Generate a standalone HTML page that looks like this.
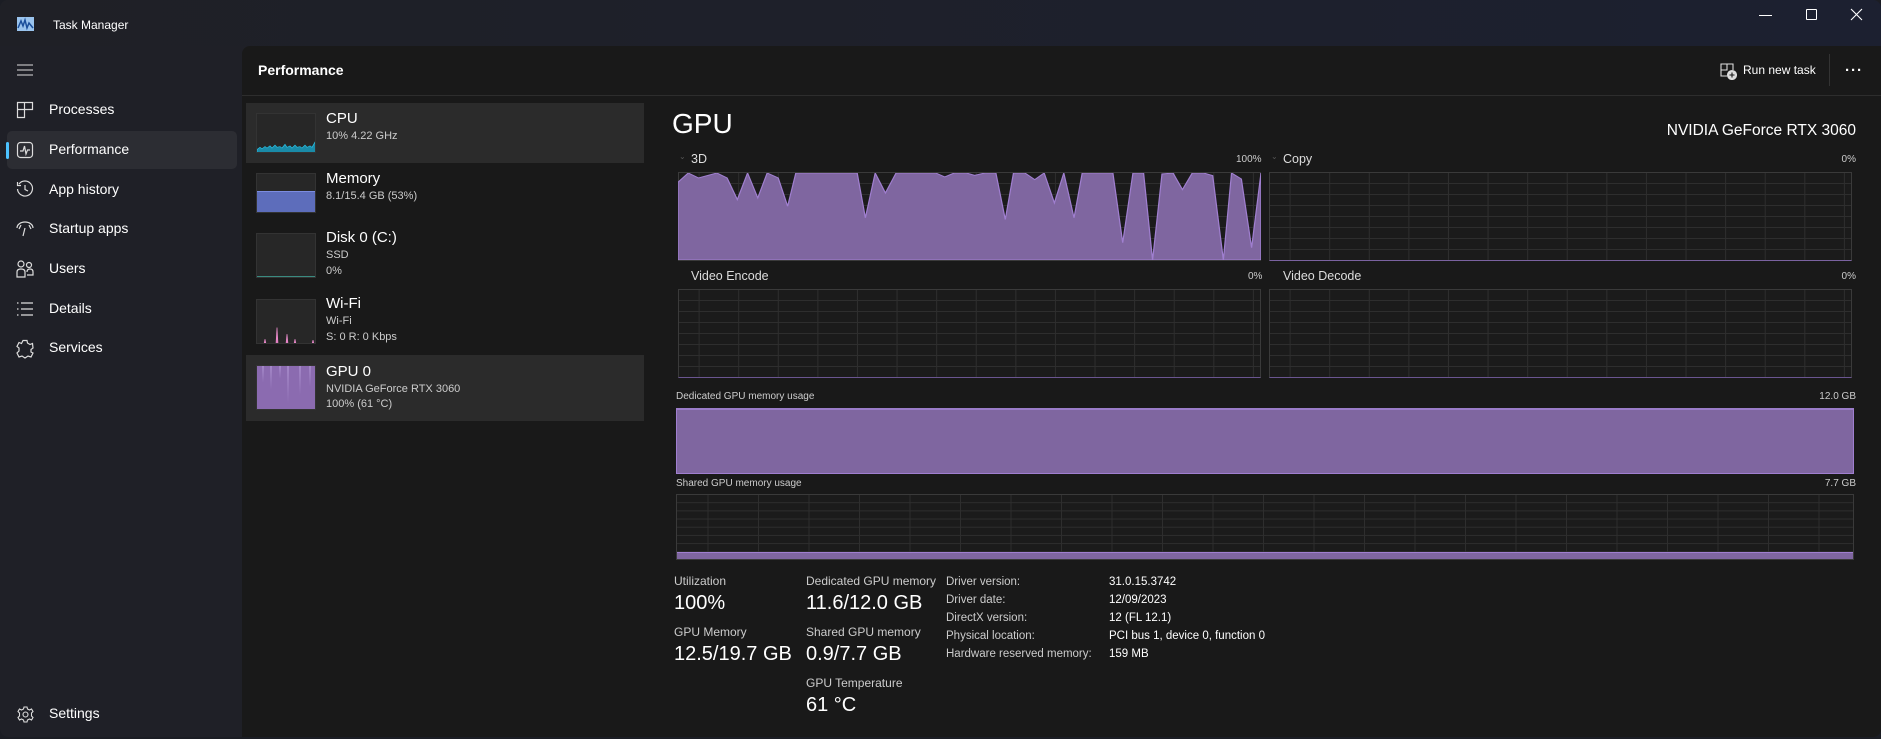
<!DOCTYPE html>
<html><head><meta charset="utf-8"><style>
*{margin:0;padding:0;box-sizing:border-box}
body{width:1881px;height:739px;background:#1b1d24;font-family:"Segoe UI","Liberation Sans",sans-serif;color:#fff;overflow:hidden;position:relative}
.win{position:absolute;left:0;top:0;width:1881px;height:737px;background:#1f2027;border-radius:8px;overflow:hidden}
.tb{position:absolute;left:0;top:0;width:1881px;height:46px;background:linear-gradient(90deg,#1f2026,#1c2030)}
.a{position:absolute;white-space:nowrap}
.content{position:absolute;left:242px;top:46px;width:1639px;height:691px;background:#191919;border-top-left-radius:8px}
.nav{position:absolute;left:49px;font-size:14px;color:#fff}
.grid{position:absolute;border:1px solid #3a3a3a;background-color:#1b1b1b;
background-image:linear-gradient(90deg,#2e2e2e 1px,transparent 1px),linear-gradient(#2e2e2e 1px,transparent 1px);
background-size:39.6px 100%,100% 11px;background-position:-20px 0,0 -1px}
.lbl{font-size:12.5px;color:#ddd}
.sm{font-size:11px;color:#ccc}
.st{font-size:12px;color:#ccc}
.big{font-size:20px;color:#fff}
.thumb{position:absolute;left:256px;width:60px;height:40px;background:#272727;border:1px solid #333;overflow:hidden}
</style></head><body>
<div class="win">
<div class="tb"></div>
<svg class="a" style="left:17px;top:17px" width="17" height="14" viewBox="0 0 17 14"><rect width="17" height="14" fill="#9ac4ee"/><polyline points="1,11 4,4 6,9 8,3 10,11 12,6 16,11" fill="none" stroke="#1a4e9a" stroke-width="1.5"/></svg>
<div class="a" style="left:53px;top:18px;font-size:12px">Task Manager</div>
<div class="a" style="left:1759px;top:15px;width:13px;height:1px;background:#fff"></div>
<div class="a" style="left:1806px;top:9px;width:11px;height:11px;border:1px solid #fff;border-radius:1px"></div>
<svg class="a" style="left:1850px;top:8px" width="13" height="13"><path d="M1 1L12 12M12 1L1 12" stroke="#fff" stroke-width="1.1"/></svg>

<svg class="a" style="left:17px;top:64px" width="16" height="12"><path d="M0 1H16M0 6H16M0 11H16" stroke="#ddd" stroke-width="1.1"/></svg>
<div class="a" style="left:7px;top:131px;width:230px;height:38px;background:#2c2d33;border-radius:5px"></div>
<div class="a" style="left:6px;top:142px;width:3px;height:17px;background:#4cc2ff;border-radius:2px"></div>

<svg class="a" style="left:16px;top:101px" width="18" height="18" fill="none" stroke="#ddd" stroke-width="1.2"><path d="M1.5 1.5H16.5V8.5H8.5V16.5H1.5ZM8.5 1.5V8.5M1.5 8.5H8.5"/></svg>
<div class="nav" style="top:101px">Processes</div>
<svg class="a" style="left:16px;top:141px" width="18" height="18" fill="none" stroke="#ddd" stroke-width="1.2"><rect x="1.5" y="1.5" width="15" height="15" rx="3"/><path d="M4 10H7L8.5 5L10 13L11.5 9H14"/></svg>
<div class="nav" style="top:141px">Performance</div>
<svg class="a" style="left:16px;top:180px" width="18" height="18" fill="none" stroke="#ddd" stroke-width="1.2"><path d="M3 4A7.5 7.5 0 1 1 1.5 9M1.5 2V5.5H5M9 5V9.5L12 11"/></svg>
<div class="nav" style="top:181px">App history</div>
<svg class="a" style="left:15px;top:220px" width="20" height="18" fill="none" stroke="#ddd" stroke-width="1.2"><path d="M2 8A8 6 0 0 1 18 8M10 8L8 16M6 5L4 9M14 5L16 9"/></svg>
<div class="nav" style="top:220px">Startup apps</div>
<svg class="a" style="left:16px;top:260px" width="18" height="19" fill="none" stroke="#ddd" stroke-width="1.2"><circle cx="5" cy="4" r="3"/><circle cx="13" cy="5" r="2.5"/><path d="M1 17V12Q1 9 5 9Q9 9 9 12V17H1ZM11 12Q11 9 14 9Q17 9 17 12V15H11"/></svg>
<div class="nav" style="top:260px">Users</div>
<svg class="a" style="left:16px;top:301px" width="18" height="16" fill="none" stroke="#ddd" stroke-width="1.2"><path d="M1 2H2.5M1 8H2.5M1 14H2.5M5 2H17M5 8H17M5 14H17"/></svg>
<div class="nav" style="top:300px">Details</div>
<svg class="a" style="left:16px;top:339px" width="18" height="20" fill="none" stroke="#ddd" stroke-width="1.2"><path d="M7 1.5H11L11.5 4L14 5.5L16.5 4.5L17 9L15 10.5V13L17 14L15 18L12 17L9 19L6 17L3 18L1 14L3 12V9L1 7.5L3 3.5L5.5 4.5Z"/></svg>
<div class="nav" style="top:339px">Services</div>
<svg class="a" style="left:17px;top:706px" width="17" height="17" fill="none" stroke="#ddd" stroke-width="1.1"><circle cx="8.5" cy="8.5" r="2.5"/><path d="M7 1H10L10.5 3L12.5 4L14.5 3L16 5.5L14.5 7V10L16 11.5L14.5 14L12.5 13L10.5 14L10 16H7L6.5 14L4.5 13L2.5 14L1 11.5L2.5 10V7L1 5.5L2.5 3L4.5 4L6.5 3Z"/></svg>
<div class="nav" style="top:705px">Settings</div>

<div class="content"></div>
<div class="a" style="left:258px;top:62px;font-size:14px;font-weight:bold">Performance</div>
<div class="a" style="left:242px;top:95px;width:1639px;height:1px;background:#2d2d2d"></div>
<svg class="a" style="left:1720px;top:63px" width="17" height="17" fill="none" stroke="#ddd" stroke-width="1.1"><path d="M1 1H7V7H1ZM7 1H13V7M1 7V13H7"/><circle cx="12" cy="12" r="4.5" fill="#ddd"/><path d="M12 9.5V14.5M9.5 12H14.5" stroke="#191919"/></svg>
<div class="a" style="left:1743px;top:63px;font-size:12px">Run new task</div>
<div class="a" style="left:1829px;top:54px;width:1px;height:32px;background:#333"></div>
<div class="a" style="left:1845px;top:62px;font-size:15px;font-weight:bold;letter-spacing:1px">···</div>

<div class="a" style="left:246px;top:103px;width:398px;height:60px;background:#2b2b2b"></div>
<div class="a" style="left:246px;top:355px;width:398px;height:66px;background:#2b2b2b"></div>

<div class="thumb" style="top:113px"><svg width="60" height="40" viewBox="0 0 60 54" preserveAspectRatio="none"><path d="M0 48L3 45L5 47L8 44L10 46L13 43L15 46L18 42L20 45L23 44L25 46L28 41L30 45L33 43L35 46L38 42L40 45L43 44L45 46L48 42L50 45L53 43L55 45L58 38L60 44V54H0Z" fill="#1a8ba8" stroke="#2bc0e4" stroke-width="0.8"/></svg></div>
<div class="a" style="left:326px;top:110px;font-size:15px">CPU</div>
<div class="a sm" style="left:326px;top:130px">10% 4.22 GHz</div>

<div class="thumb" style="top:173px"><div style="position:absolute;left:0;bottom:0;width:60px;height:21px;background:#5d6dbb;border-top:1px solid #7c8ce0"></div></div>
<div class="a" style="left:326px;top:170px;font-size:15px">Memory</div>
<div class="a sm" style="left:326px;top:190px">8.1/15.4 GB (53%)</div>

<div class="thumb" style="top:233px;height:45px"><div style="position:absolute;left:0;bottom:0;width:60px;height:1px;background:#3a8a80"></div></div>
<div class="a" style="left:326px;top:229px;font-size:15px">Disk 0 (C:)</div>
<div class="a sm" style="left:326px;top:249px">SSD</div>
<div class="a sm" style="left:326px;top:265px">0%</div>

<div class="thumb" style="top:299px;height:45px"><svg width="60" height="45" viewBox="0 0 60 54" preserveAspectRatio="none"><path d="M0 53L7 53L8 47L9 53L19 53L20 33L21 53L29 53L30 41L31 53L37 53L38 47L39 53L55 53L56 48L57 53L60 53V54H0Z" fill="#d870b8" stroke="#f090d0" stroke-width="0.7"/></svg></div>
<div class="a" style="left:326px;top:295px;font-size:15px">Wi-Fi</div>
<div class="a sm" style="left:326px;top:315px">Wi-Fi</div>
<div class="a sm" style="left:326px;top:331px">S: 0 R: 0 Kbps</div>

<div class="thumb" style="top:365px;height:45px;background:#8b6bb0"><svg width="60" height="45" viewBox="0 0 60 54" preserveAspectRatio="none"><path d="M0 0H60V54H0Z" fill="#8b6bb0"/><path d="M5 0L6 20L7 0M13 0L14 28L15 0M22 0L23 15L24 0M30 0L31 45L32 0M42 0L43 35L44 0M52 0L53 25L54 0" fill="#a488c8"/></svg></div>
<div class="a" style="left:326px;top:363px;font-size:15px">GPU 0</div>
<div class="a sm" style="left:326px;top:383px">NVIDIA GeForce RTX 3060</div>
<div class="a sm" style="left:326px;top:398px">100% (61 °C)</div>

<div class="a" style="left:672px;top:108px;font-size:28px">GPU</div>
<div class="a" style="right:25px;top:122px;font-size:15.5px">NVIDIA GeForce RTX 3060</div>

<div class="a" style="left:679px;top:152px;font-size:8px;color:#555">⌄</div>
<div class="a lbl" style="left:691px;top:152px">3D</div>
<div class="a sm" style="left:1236px;top:154px;font-size:10px">100%</div>
<div class="grid" style="left:678px;top:172px;width:583px;height:89px"></div>
<svg class="a" style="left:678px;top:173px" width="583" height="87" viewBox="45 250 1425 262" preserveAspectRatio="none"><path d="M45 512L45 278L70 250L95 265L140 250L165 265L190 330L215 250L240 325L263 250L290 265L313 350L333 250L483 250L503 385L527 250L552 310L578 250L675 250L697 262L720 250L750 250L770 257L795 250L822 250L845 390L865 250L893 250L917 270L940 250L965 340L988 250L1013 385L1033 250L1108 250L1132 460L1157 250L1183 250L1205 512L1228 253L1255 250L1278 300L1302 250L1330 250L1352 258L1378 512L1398 250L1422 268L1447 475L1470 250L1470 512Z" fill="#7f66a0" stroke="#a07fd0" stroke-width="3"/></svg>

<div class="a" style="left:1271px;top:152px;font-size:8px;color:#555">⌄</div>
<div class="a lbl" style="left:1283px;top:152px">Copy</div>
<div class="a sm" style="right:25px;top:154px;font-size:10px">0%</div>
<div class="grid" style="left:1269px;top:172px;width:583px;height:89px;border-bottom:1px solid #7a62a0"></div>

<div class="a lbl" style="left:691px;top:269px">Video Encode</div>
<div class="a sm" style="left:1248px;top:271px;font-size:10px">0%</div>
<div class="grid" style="left:678px;top:289px;width:583px;height:89px;border-bottom:1px solid #6a5590"></div>

<div class="a lbl" style="left:1283px;top:269px">Video Decode</div>
<div class="a sm" style="right:25px;top:271px;font-size:10px">0%</div>
<div class="grid" style="left:1269px;top:289px;width:583px;height:89px;border-bottom:1px solid #6a5590"></div>

<div class="a sm" style="left:676px;top:391px;font-size:10px">Dedicated GPU memory usage</div>
<div class="a sm" style="right:25px;top:391px;font-size:10px">12.0 GB</div>
<div class="a" style="left:676px;top:408px;width:1178px;height:66px;background:#7f66a0;border:1px solid #a07fd0;border-top:2px solid #9a7cc8"></div>

<div class="a sm" style="left:676px;top:478px;font-size:10px">Shared GPU memory usage</div>
<div class="a sm" style="right:25px;top:478px;font-size:10px">7.7 GB</div>
<div class="grid" style="left:676px;top:494px;width:1178px;height:66px;background-size:50.5px 100%,100% 8.2px"></div>
<div class="a" style="left:677px;top:552px;width:1176px;height:7px;background:#7f66a0;border-top:1px solid #a07fd0"></div>

<div class="a st" style="left:674px;top:574px">Utilization</div>
<div class="a big" style="left:674px;top:592px">100%</div>
<div class="a st" style="left:674px;top:625px">GPU Memory</div>
<div class="a big" style="left:674px;top:643px">12.5/19.7 GB</div>

<div class="a st" style="left:806px;top:574px">Dedicated GPU memory</div>
<div class="a big" style="left:806px;top:592px">11.6/12.0 GB</div>
<div class="a st" style="left:806px;top:625px">Shared GPU memory</div>
<div class="a big" style="left:806px;top:643px">0.9/7.7 GB</div>
<div class="a st" style="left:806px;top:676px">GPU Temperature</div>
<div class="a big" style="left:806px;top:694px">61 °C</div>

<div class="a st" style="left:946px;top:573px;line-height:18px;font-size:11.5px">Driver version:<br>Driver date:<br>DirectX version:<br>Physical location:<br>Hardware reserved memory:</div>
<div class="a st" style="left:1109px;top:573px;line-height:18px;font-size:11.5px;color:#fff">31.0.15.3742<br>12/09/2023<br>12 (FL 12.1)<br>PCI bus 1, device 0, function 0<br>159 MB</div>
</div>
</body></html>
